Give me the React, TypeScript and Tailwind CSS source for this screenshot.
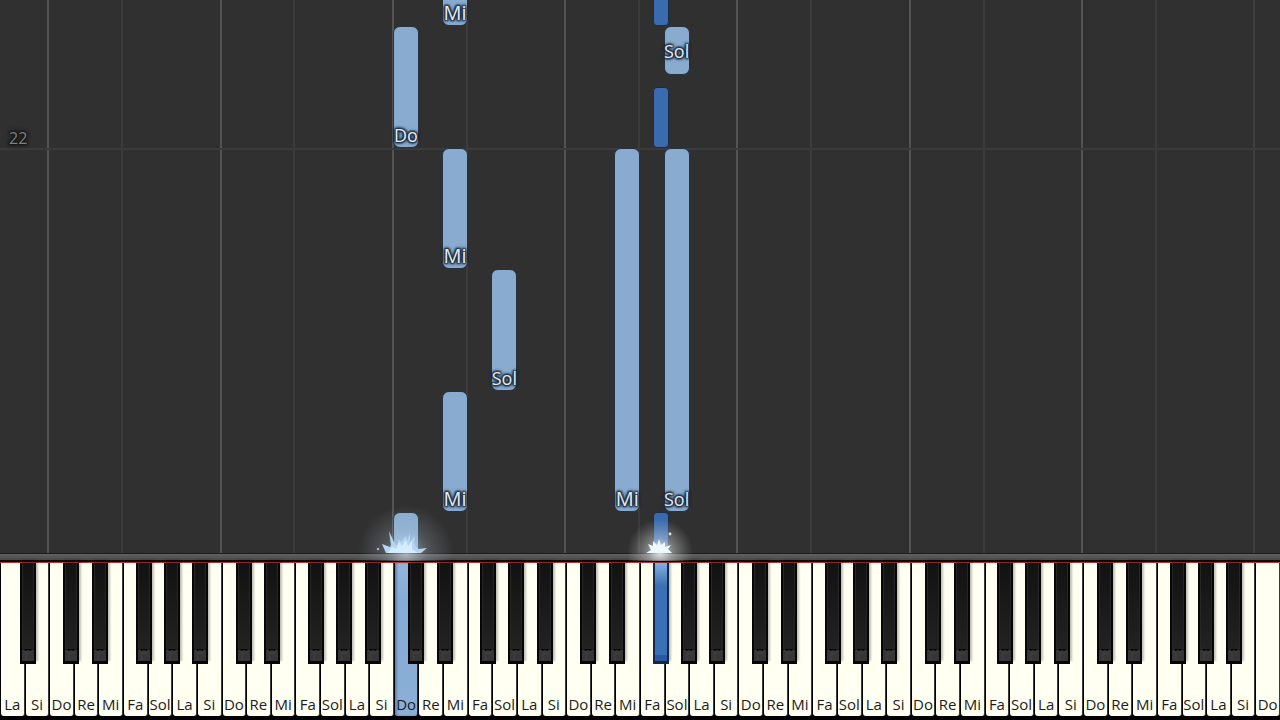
import clsx from "clsx";

const WHITE_KEYS = 52;
const NAMES = ["Do", "Re", "Mi", "Fa", "Sol", "La", "Si"];

// the keyboard starts on La, five white keys above Do
const KEYS = Array.from({ length: WHITE_KEYS }, (_, i) => NAMES[(i + 5) % 7]);

// how far into its white key each black key starts
const SHARP_LEFT: Record<string, string> = {
  Do: "left-[57%]",
  Re: "left-[74%]",
  Fa: "left-[52%]",
  Sol: "left-[65%]",
  La: "left-[81%]",
};

const BEAT = 121.5;
const FIRST_BEAT = 39.5;

type Note = {
  key: number;
  from: number;
  to: number;
  sharp?: boolean;
  short?: boolean;
};

const NOTES: Note[] = [
  { key: 16, from: -1, to: 0 },
  { key: 18, from: 0, to: 1 },
  { key: 20, from: 1, to: 2 },
  { key: 18, from: 2, to: 3 },
  { key: 16, from: 3, to: 4 },
  { key: 18, from: 4, to: 5 },
  { key: 25, from: 0, to: 3 },
  { key: 27, from: 0, to: 3 },
  { key: 27, from: 3.6, to: 4, short: true },
  { key: 26, from: -1, to: 0, sharp: true },
  { key: 26, from: 3, to: 3.5, sharp: true },
  { key: 26, from: 4, to: 5, sharp: true },
];

function NoteBar({ note }: { note: Note }) {
  const bottom = Math.round(FIRST_BEAT + note.from * BEAT) + 2;
  const top = Math.round(FIRST_BEAT + note.to * BEAT);
  const name = KEYS[note.key];
  const left = ((note.key + (note.sharp ? 0.52 : -0.04)) / WHITE_KEYS) * 100;

  return (
    <div
      className={clsx(
        "absolute flex justify-center border",
        note.sharp
          ? "w-4 rounded-sm border-[#1c2b42] bg-[#3a6bae]"
          : "w-[26px] rounded-[7px] border-[#26323f] bg-[#88abcf]",
        note.short ? "items-center" : "items-end",
      )}
      style={{ left: `${left}%`, bottom: bottom - 1, height: top - bottom + 2 }}
    >
      {!note.sharp && note.from >= 0 && (
        <span
          className={clsx(
            "leading-6 text-[#e6ecf2] [text-shadow:0_0_2px_#1d2c3e,0_0_3px_#1d2c3e,0_0_4px_#1d2c3e,1px_1px_2px_#1d2c3e,-1px_-1px_2px_#1d2c3e,1px_-1px_2px_#1d2c3e,-1px_1px_2px_#1d2c3e]",
            name === "Mi" ? "text-xl" : "text-lg",
          )}
        >
          {name}
        </span>
      )}
    </div>
  );
}

function Roll() {
  return (
    <section aria-label="Notes" className="relative min-h-[553px] flex-1 overflow-hidden bg-[#303030]">
      <div className="absolute inset-0 grid grid-cols-[repeat(52,minmax(0,1fr))]">
        {KEYS.map((name, i) => (
          <div
            key={i}
            className={clsx(
              name === "Si" && i < 50 && "border-r-2 border-[#535353]",
              name === "Si" && i === 50 && "border-r-2 border-[#404040]",
              name === "Mi" && "border-r-2 border-[#3b3b3b]",
            )}
          />
        ))}
      </div>

      {/* bar line */}
      <div className="absolute inset-x-0 bottom-[403px] h-0.5 bg-[#3b3b3b]" />
      <span className="absolute bottom-[403px] left-[9px] text-base leading-6 text-[#808080] [text-shadow:0_0_2px_#111,0_0_3px_#111,0_0_4px_#111,0_0_5px_#111]">
        22
      </span>

      {NOTES.map((note, i) => (
        <NoteBar key={i} note={note} />
      ))}
    </section>
  );
}

function BlackKey({ name, pressed }: { name: string; pressed: boolean }) {
  return (
    <button
      type="button"
      aria-label={`${name} diesis`}
      aria-pressed={pressed}
      className={clsx(
        "absolute top-0 z-10 flex h-[101px] w-4 flex-col px-0.5 pb-[3px] shadow-[2px_-3px_2px_rgba(0,0,0,0.25)]",
        pressed ? "bg-[#12294a]" : "bg-[#060606]",
        SHARP_LEFT[name],
      )}
    >
      {pressed ? (
        <>
          <span className="w-full flex-1 bg-linear-to-b from-[#83aedd] via-[#3c70b6] via-25% to-[#3a70b8]" />
          <span className="h-1.5 w-full bg-[#2a59a0]" />
        </>
      ) : (
        <>
          <span className="w-full flex-1 border-x border-[#262626] bg-linear-to-b from-[#121212] to-[#222]" />
          <svg viewBox="0 0 12 12" className="h-3 w-3" aria-hidden="true">
            <path d="M0 1 2 0 3 2 6 1 9 2 10 0 12 1V12H0Z" fill="#363636" />
            <path d="M2 2 4 4H8L10 2M4 4V11" fill="none" stroke="#4a4a4a" strokeWidth=".6" />
          </svg>
        </>
      )}
    </button>
  );
}

function Splash({ big }: { big?: boolean }) {
  if (big) {
    return (
      <svg viewBox="0 0 100 58" className="h-[58px] w-[100px]" aria-hidden="true">
        <defs>
          <radialGradient id="glow-big">
            <stop offset="0" stopColor="#e4f1ff" stopOpacity=".6" />
            <stop offset=".45" stopColor="#c8d8e8" stopOpacity=".22" />
            <stop offset="1" stopColor="#b0c0d0" stopOpacity="0" />
          </radialGradient>
        </defs>
        <circle cx="54" cy="50" r="48" fill="url(#glow-big)" />
        <path
          d="M34 50 30 41 38 44 39 42 37 28 42 39 45 43 47 36 49 39 54 33 55 38 58 30 58 39 63 33 62 41 66 46 75 45 69 50Z"
          fill="#b5d5f5"
        />
        <path d="M36 50 40 44 44 46 47 39 50 43 54 37 56 43 60 38 60 46 66 50Z" fill="#d6ecff" />
        <circle cx="26" cy="46" r="1.2" fill="#a9bac6" />
      </svg>
    );
  }
  return (
    <svg viewBox="0 0 100 58" className="h-[58px] w-[100px]" aria-hidden="true">
      <defs>
        <radialGradient id="glow-small">
          <stop offset="0" stopColor="#fff" stopOpacity=".85" />
          <stop offset=".4" stopColor="#eef0f2" stopOpacity=".4" />
          <stop offset="1" stopColor="#ccc" stopOpacity="0" />
        </radialGradient>
      </defs>
      <circle cx="51" cy="49" r="33" fill="url(#glow-small)" />
      <path
        d="M37 50 42 47 39 41 44 43 44 38 48 42 50 36 52 42 56 39 56 44 62 42 59 46 63 50Z"
        fill="#eef8ff"
      />
      <circle cx="61" cy="31" r="1.4" fill="#e5e5e5" />
    </svg>
  );
}

function Keyboard() {
  return (
    <section aria-label="Keyboard" className="relative">
      <div className="h-[7px] border-t border-[#1c1c1c] bg-linear-to-b from-[#626262] to-[#484848]" />
      <div className="h-0.5 bg-[#0c0c0c]" />
      <div className="h-px bg-[#b83434]" />
      <div className="grid grid-cols-[repeat(52,minmax(0,1fr))] bg-black pb-1">
        {KEYS.map((name, i) => {
          const pressed = i === 16;
          return (
            <div key={i} className="relative pl-px">
              <button
                type="button"
                aria-pressed={pressed}
                className={clsx(
                  "flex h-[153px] w-full items-end justify-center rounded-b-[3px] border-r text-[15px] leading-6 text-[#1c1c1c]",
                  pressed
                    ? "border-[#1d2c3e] bg-linear-to-b from-[#92b5dc] via-[#86abd4] via-25% to-[#8bafd6] shadow-[inset_2px_0_2px_#6787ab]"
                    : "border-[#3a3a38] bg-[#fffff2]",
                )}
              >
                {name}
              </button>
              {SHARP_LEFT[name] && i < 51 && <BlackKey name={name} pressed={i === 26} />}
            </div>
          );
        })}
      </div>

      {/* sparks where a note meets the keys */}
      <div className="pointer-events-none absolute -top-[50px] left-[31.4%] z-20 -translate-x-1/2">
        <Splash big />
      </div>
      <div className="pointer-events-none absolute -top-[50px] left-[51.5%] z-20 -translate-x-1/2">
        <Splash />
      </div>
    </section>
  );
}

export default function App() {
  return (
    <main className="flex min-h-screen flex-col overflow-hidden bg-black font-['Open_Sans','Noto_Sans',sans-serif]">
      <Roll />
      <Keyboard />
    </main>
  );
}
